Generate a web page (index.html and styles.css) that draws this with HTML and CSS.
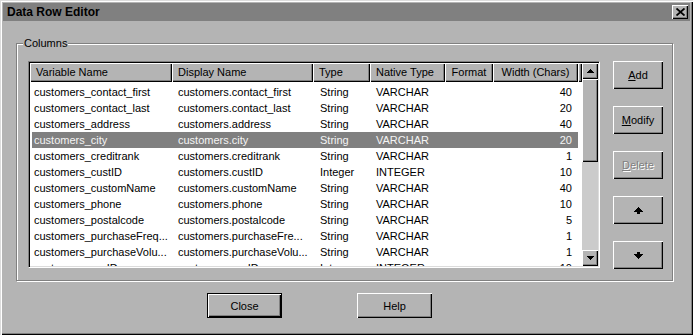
FILE: index.html
```html
<!DOCTYPE html>
<html lang="en">
<head>
    <meta charset="UTF-8">
    <title>Data Row Editor</title>
    <link rel="stylesheet" href="styles.css">
</head>
<body>
    <div class="window">
        <div class="titlebar">
            <span class="title">Data Row Editor</span>
            <button class="title-close">
                <svg width="9" height="8" viewBox="0 0 9 8"><path d="M0.5 0.5L8.5 7.5M8.5 0.5L0.5 7.5" stroke="#000" stroke-width="1.8"/></svg>
            </button>
        </div>
        <div class="content">
            <div class="group">
                <span class="group-label">Columns</span>
                <div class="listbox">
                    <div class="list">
                        <div class="list-header">
                            <div class="hcell col-var">Variable Name</div>
                            <div class="hcell col-disp">Display Name</div>
                            <div class="hcell col-type">Type</div>
                            <div class="hcell col-native">Native Type</div>
                            <div class="hcell col-format">Format</div>
                            <div class="hcell col-width">Width (Chars)</div>
                            <div class="hcell col-rest"></div>
                        </div>
                        <div class="list-rows">
                            <div class="row"><span class="c-var">customers_contact_first</span><span class="c-disp">customers.contact_first</span><span class="c-type">String</span><span class="c-native">VARCHAR</span><span class="c-format"></span><span class="c-width">40</span></div>
                            <div class="row"><span class="c-var">customers_contact_last</span><span class="c-disp">customers.contact_last</span><span class="c-type">String</span><span class="c-native">VARCHAR</span><span class="c-format"></span><span class="c-width">20</span></div>
                            <div class="row"><span class="c-var">customers_address</span><span class="c-disp">customers.address</span><span class="c-type">String</span><span class="c-native">VARCHAR</span><span class="c-format"></span><span class="c-width">40</span></div>
                            <div class="row selected"><span class="c-var">customers_city</span><span class="c-disp">customers.city</span><span class="c-type">String</span><span class="c-native">VARCHAR</span><span class="c-format"></span><span class="c-width">20</span></div>
                            <div class="row"><span class="c-var">customers_creditrank</span><span class="c-disp">customers.creditrank</span><span class="c-type">String</span><span class="c-native">VARCHAR</span><span class="c-format"></span><span class="c-width">1</span></div>
                            <div class="row"><span class="c-var">customers_custID</span><span class="c-disp">customers.custID</span><span class="c-type">Integer</span><span class="c-native">INTEGER</span><span class="c-format"></span><span class="c-width">10</span></div>
                            <div class="row"><span class="c-var">customers_customName</span><span class="c-disp">customers.customName</span><span class="c-type">String</span><span class="c-native">VARCHAR</span><span class="c-format"></span><span class="c-width">40</span></div>
                            <div class="row"><span class="c-var">customers_phone</span><span class="c-disp">customers.phone</span><span class="c-type">String</span><span class="c-native">VARCHAR</span><span class="c-format"></span><span class="c-width">10</span></div>
                            <div class="row"><span class="c-var">customers_postalcode</span><span class="c-disp">customers.postalcode</span><span class="c-type">String</span><span class="c-native">VARCHAR</span><span class="c-format"></span><span class="c-width">5</span></div>
                            <div class="row"><span class="c-var">customers_purchaseFreq...</span><span class="c-disp">customers.purchaseFre...</span><span class="c-type">String</span><span class="c-native">VARCHAR</span><span class="c-format"></span><span class="c-width">1</span></div>
                            <div class="row"><span class="c-var">customers_purchaseVolu...</span><span class="c-disp">customers.purchaseVolu...</span><span class="c-type">String</span><span class="c-native">VARCHAR</span><span class="c-format"></span><span class="c-width">1</span></div>
                            <div class="row"><span class="c-var">customers_repID</span><span class="c-disp">customers.repID</span><span class="c-type">Integer</span><span class="c-native">INTEGER</span><span class="c-format"></span><span class="c-width">10</span></div>
                        </div>
                    </div>
                    <div class="scrollbar">
                        <div class="sb-btn">
                            <svg width="7" height="4" viewBox="0 0 7 4"><path d="M3 0h1v1h1v1h1v1h1v1H0V3h1V2h1V1h1z" fill="#000"/></svg>
                        </div>
                        <div class="sb-track"><div class="sb-thumb"></div></div>
                        <div class="sb-btn">
                            <svg width="7" height="4" viewBox="0 0 7 4"><path d="M0 0h7v1H6v1H5v1H4v1H3V3H2V2H1V1H0z" fill="#000"/></svg>
                        </div>
                    </div>
                </div>
                <div class="side-buttons">
                    <button class="btn side"><u>A</u>dd</button>
                    <button class="btn side"><u>M</u>odify</button>
                    <button class="btn side disabled"><u>D</u>elete</button>
                    <button class="btn side">
                        <svg width="9" height="7" viewBox="0 0 9 7"><path d="M4 0h1v1h1v1h1v1h1v1h1v1H6v2H3V5H0V4h1V3h1V2h1V1h1z" fill="#000"/></svg>
                    </button>
                    <button class="btn side">
                        <svg width="9" height="7" viewBox="0 0 9 7"><path d="M3 0h3v2h3v1H8v1H7v1H6v1H5v1H4V6H3V5H2V4H1V3H0V2h3z" fill="#000"/></svg>
                    </button>
                </div>
            </div>
            <div class="footer">
                <button class="btn wide default">Close</button>
                <button class="btn wide">Help</button>
            </div>
        </div>
    </div>
</body>
</html>
```

FILE: styles.css
```css
* {
    box-sizing: border-box;
}
body {
    margin: 0;
    background-color: #b4b4b4;
    font-family: "Liberation Sans", Arial, sans-serif;
    font-size: 11px;
    color: #000;
}
.window {
    width: 693px;
    height: 335px;
    padding: 3px;
    background-color: #b4b4b4;
    box-shadow: inset 1px 1px #dcdcdc, inset 2px 2px #fff, inset -1px -1px #000, inset -2px -2px #808080;
}
.titlebar {
    height: 18px;
    padding: 0 2px 0 4px;
    display: flex;
    align-items: center;
    justify-content: space-between;
    background-color: #808080;
}
.title {
    font-weight: bold;
    font-size: 12px;
}
.title-close {
    width: 16px;
    height: 14px;
    padding: 0;
    border: none;
    display: flex;
    align-items: center;
    justify-content: center;
    background-color: #b4b4b4;
    box-shadow: inset 1px 1px #fff, inset -1px -1px #000, inset -2px -2px #808080;
}
.content {
    padding: 22px 17px 0 13px;
}

/* Columns group box */
.group {
    position: relative;
    height: 238px;
    padding: 17px 9px 0 11px;
    display: flex;
    align-items: flex-start;
    border: 1px solid #808080;
    box-shadow: inset 1px 1px #fff, 1px 1px #fff;
}
.group-label {
    position: absolute;
    top: -7px;
    left: 6px;
    padding: 0 1px;
    line-height: 13px;
    background-color: #b4b4b4;
}

/* List */
.listbox {
    width: 572px;
    height: 207px;
    padding: 1px;
    display: flex;
    background-color: #fff;
    border: 1px solid;
    border-color: #808080 #fff #fff #808080;
    box-shadow: inset 1px 1px #000, inset -1px -1px #dcdcdc;
}
.list {
    width: 552px;
    overflow: hidden;
}
.list-header {
    display: flex;
    height: 19px;
    margin-bottom: 2px;
}
.hcell {
    height: 19px;
    padding-left: 6px;
    line-height: 19px;
    white-space: nowrap;
    background-color: #b4b4b4;
    box-shadow: inset 1px 1px #fff, inset -1px -1px #000, inset -2px -2px #808080;
}
.col-var { width: 142px; }
.col-disp { width: 141px; }
.col-type { width: 57px; }
.col-native { width: 75px; }
.col-format { width: 48px; padding-left: 0; text-align: center; }
.col-width { width: 85px; padding-left: 0; text-align: center; }
.col-rest { width: 4px; padding-left: 0; }

.row {
    display: flex;
    width: 548px;
    height: 16px;
    padding-left: 2px;
    line-height: 16px;
    white-space: nowrap;
}
.row.selected {
    background-color: #808080;
    background-clip: content-box;
    color: #f4f4f4;
}
.c-var { width: 140px; padding-left: 2px; }
.c-disp { width: 141px; padding-left: 6px; }
.c-type { width: 57px; padding-left: 7px; }
.c-native { width: 75px; padding-left: 6px; }
.c-format { width: 48px; }
.c-width { width: 85px; padding-right: 6px; text-align: right; }

/* Scrollbar */
.scrollbar {
    width: 16px;
    display: flex;
    flex-direction: column;
}
.sb-btn {
    height: 16px;
    display: flex;
    align-items: center;
    justify-content: center;
    background-color: #b4b4b4;
    box-shadow: inset 1px 1px #fff, inset -1px -1px #000, inset -2px -2px #808080;
}
.sb-track {
    flex: 1;
    background-color: #cbcbcb;
}
.sb-thumb {
    height: 83px;
    background-color: #b4b4b4;
    box-shadow: inset 1px 1px #fff, inset -1px -1px #000, inset -2px -2px #808080;
}

/* Buttons */
.btn {
    padding: 0;
    border: none;
    display: flex;
    align-items: center;
    justify-content: center;
    font-family: "Liberation Sans", Arial, sans-serif;
    font-size: 11px;
    color: #000;
    background-color: #b4b4b4;
    box-shadow: inset 1px 1px #fff, inset -1px -1px #000, inset -2px -2px #808080;
}
.btn.default {
    box-shadow: inset 0 0 0 1px #000, inset 2px 2px #fff, inset -2px -2px #000, inset -3px -3px #808080;
}
.btn.disabled {
    color: #808080;
    text-shadow: 1px 1px #fff;
}
.side-buttons {
    margin-left: 13px;
    display: flex;
    flex-direction: column;
    gap: 17px;
}
.btn.side {
    width: 50px;
    height: 28px;
}
.footer {
    display: flex;
    gap: 75px;
    padding: 12px 0 0 191px;
}
.btn.wide {
    width: 75px;
    height: 25px;
}
```
